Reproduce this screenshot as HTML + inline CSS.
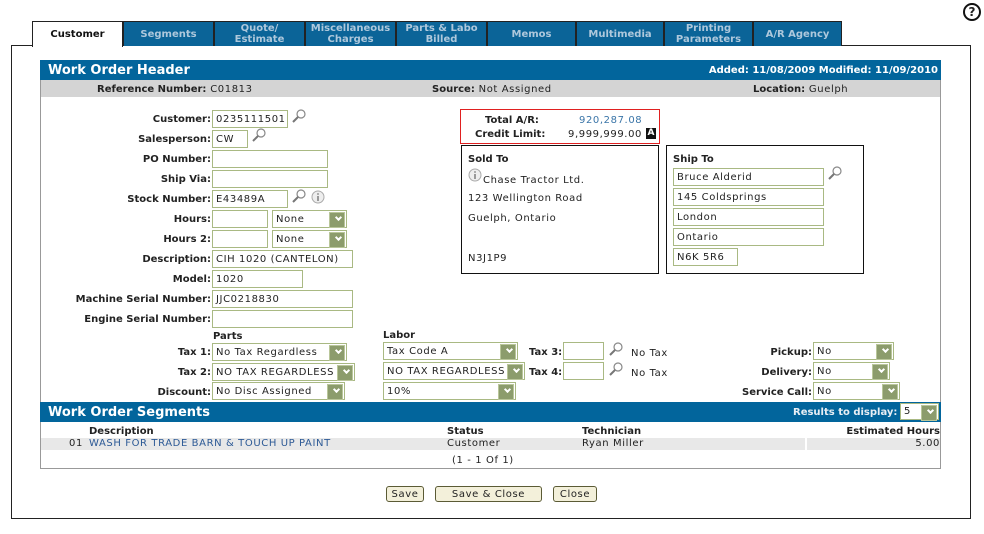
<!DOCTYPE html>
<html><head><meta charset="utf-8"><style>
*{margin:0;padding:0;box-sizing:border-box}
body{width:984px;height:534px;background:#fff;position:relative;font-family:"DejaVu Sans","Liberation Sans",sans-serif;font-size:10px;color:#222;overflow:hidden;letter-spacing:.6px}
b,.lbl,.tab{letter-spacing:0}
.a{position:absolute;white-space:nowrap}
.t{margin-top:1px}
.tab{position:absolute;top:21px;height:25px;background:#0b6498;border:1px solid #222;border-bottom:none;color:#aec8dc;font-weight:bold;font-size:10px;text-align:center;line-height:11px;display:flex;align-items:center;justify-content:center}
.lbl{position:absolute;font-weight:bold;text-align:right;width:200px;white-space:nowrap;margin-top:1px}
.in{position:absolute;height:18px;border:1px solid #a9b983;background:#fff;padding-left:3px;line-height:18px;white-space:nowrap;color:#222}
.sel{position:absolute;height:18px;border:1px solid #a9b983;background:#fff;padding-left:3px;line-height:18px;white-space:nowrap}
.sel:after{content:"";position:absolute;right:1px;top:1px;width:14px;height:14px;background:#8c9c6c;border:1px solid #b9c69a}
.sel i{position:absolute;right:5px;top:4px;width:5px;height:5px;border-right:2px solid #fff;border-bottom:2px solid #fff;transform:rotate(45deg);z-index:2}
.mag{position:absolute;width:14px;height:14px}
.btn{position:absolute;top:486px;height:16px;border:1px solid #5b5b35;border-radius:3px;background:#f3f0da;text-align:center;line-height:15px;font-size:10px}
</style></head><body>
<div class="a" style="left:963px;top:3px;width:18px;height:18px;border:2px solid #111;border-radius:50%;text-align:center;font-weight:bold;font-size:12px;line-height:14px;letter-spacing:0">?</div>

<div class="a" style="left:11px;top:45px;width:960px;height:474px;border:1px solid #222"></div>
<div class="tab" style="left:32px;width:91px;background:#fff;color:#111;height:26px">Customer</div>
<div class="tab" style="left:123px;width:91px">Segments</div>
<div class="tab" style="left:214px;width:91px">Quote/<br>Estimate</div>
<div class="tab" style="left:305px;width:91px">Miscellaneous<br>Charges</div>
<div class="tab" style="left:396px;width:91px">Parts &amp; Labo<br>Billed</div>
<div class="tab" style="left:487px;width:89px">Memos</div>
<div class="tab" style="left:576px;width:88px">Multimedia</div>
<div class="tab" style="left:664px;width:89px">Printing<br>Parameters</div>
<div class="tab" style="left:753px;width:89px">A/R Agency</div>

<div class="a" style="left:40px;top:60px;width:901px;height:409px;border:1px solid #999"></div>
<div class="a" style="left:40px;top:60px;width:901px;height:20px;background:#02659c;color:#fff;font-weight:bold;font-size:13px;line-height:21px;padding-left:8px;letter-spacing:0">Work Order Header</div>
<div class="a" style="right:46px;top:61px;color:#fff;font-weight:bold;font-size:10px;line-height:20px;letter-spacing:0">Added: 11/08/2009 Modified: 11/09/2010</div>
<div class="a" style="left:41px;top:80px;width:899px;height:17px;background:#d4d4d4"></div>
<div class="a" style="left:97px;top:84px"><b>Reference Number:</b> C01813</div>
<div class="a" style="left:432px;top:84px"><b>Source:</b> Not Assigned</div>
<div class="a" style="left:753px;top:84px"><b>Location:</b> Guelph</div>

<div class="lbl" style="left:11px;top:113px">Customer:</div><div class="in" style="left:212px;top:110px;width:76px">0235111501</div>
<div class="lbl" style="left:11px;top:133px">Salesperson:</div><div class="in" style="left:212px;top:130px;width:36px">CW</div>
<div class="lbl" style="left:11px;top:153px">PO Number:</div><div class="in" style="left:212px;top:150px;width:116px"></div>
<div class="lbl" style="left:11px;top:173px">Ship Via:</div><div class="in" style="left:212px;top:170px;width:116px"></div>
<div class="lbl" style="left:11px;top:193px">Stock Number:</div><div class="in" style="left:212px;top:190px;width:76px">E43489A</div>
<div class="lbl" style="left:11px;top:213px">Hours:</div><div class="in" style="left:212px;top:210px;width:56px"></div><div class="sel" style="left:272px;top:210px;width:75px">None<i></i></div>
<div class="lbl" style="left:11px;top:233px">Hours 2:</div><div class="in" style="left:212px;top:230px;width:56px"></div><div class="sel" style="left:272px;top:230px;width:75px">None<i></i></div>
<div class="lbl" style="left:11px;top:253px">Description:</div><div class="in" style="left:212px;top:250px;width:141px">CIH 1020 (CANTELON)</div>
<div class="lbl" style="left:11px;top:273px">Model:</div><div class="in" style="left:212px;top:270px;width:91px">1020</div>
<div class="lbl" style="left:11px;top:293px">Machine Serial Number:</div><div class="in" style="left:212px;top:290px;width:141px">JJC0218830</div>
<div class="lbl" style="left:11px;top:313px">Engine Serial Number:</div><div class="in" style="left:212px;top:310px;width:141px"></div>

<svg class="mag" style="left:292px;top:109px" viewBox="0 0 14 14"><circle cx="9" cy="5" r="4" fill="none" stroke="#888" stroke-width="1.2"/><path d="M6 8 L1 13" stroke="#777" stroke-width="2"/></svg>
<svg class="mag" style="left:252px;top:128px" viewBox="0 0 14 14"><circle cx="9" cy="5" r="4" fill="none" stroke="#888" stroke-width="1.2"/><path d="M6 8 L1 13" stroke="#777" stroke-width="2"/></svg>
<svg class="mag" style="left:292px;top:189px" viewBox="0 0 14 14"><circle cx="9" cy="5" r="4" fill="none" stroke="#888" stroke-width="1.2"/><path d="M6 8 L1 13" stroke="#777" stroke-width="2"/></svg>
<svg class="a" style="left:311px;top:190px" width="14" height="14" viewBox="0 0 14 14"><circle cx="7" cy="7" r="6" fill="#eee" stroke="#aaa"/><rect x="6" y="6" width="2" height="5" fill="#999"/><circle cx="7" cy="4" r="1" fill="#999"/></svg>

<div class="a" style="left:460px;top:109px;width:200px;height:35px;border:1px solid #e02020"></div>
<div class="a" style="left:485px;top:115px;font-weight:bold;letter-spacing:0">Total A/R:</div>
<div class="a" style="left:579px;top:115px;color:#3a75a8">920,287.08</div>
<div class="a" style="left:475px;top:129px;font-weight:bold;letter-spacing:0">Credit Limit:</div>
<div class="a" style="left:568px;top:129px">9,999,999.00</div>
<div class="a" style="left:646px;top:128px;width:10px;height:11px;background:#111;color:#fff;font-weight:bold;font-size:9px;text-align:center;line-height:11px;letter-spacing:0">A</div>

<div class="a" style="left:461px;top:145px;width:198px;height:129px;border:1px solid #111"></div>
<div class="a" style="left:468px;top:154px;font-weight:bold;letter-spacing:0">Sold To</div>
<svg class="a" style="left:468px;top:168px" width="14" height="14" viewBox="0 0 14 14"><circle cx="7" cy="7" r="6" fill="#eee" stroke="#aaa"/><rect x="6" y="6" width="2" height="5" fill="#999"/><circle cx="7" cy="4" r="1" fill="#999"/></svg>
<div class="a" style="left:483px;top:175px">Chase Tractor Ltd.</div>
<div class="a" style="left:468px;top:193px">123 Wellington Road</div>
<div class="a" style="left:468px;top:213px">Guelph, Ontario</div>
<div class="a" style="left:468px;top:253px">N3J1P9</div>

<div class="a" style="left:666px;top:145px;width:198px;height:129px;border:1px solid #111"></div>
<div class="a" style="left:673px;top:154px;font-weight:bold;letter-spacing:0">Ship To</div>
<div class="in" style="left:673px;top:168px;width:151px">Bruce Alderid</div>
<div class="in" style="left:673px;top:188px;width:151px">145 Coldsprings</div>
<div class="in" style="left:673px;top:208px;width:151px">London</div>
<div class="in" style="left:673px;top:228px;width:151px">Ontario</div>
<div class="in" style="left:673px;top:248px;width:65px">N6K 5R6</div>
<svg class="mag" style="left:828px;top:166px" viewBox="0 0 14 14"><circle cx="9" cy="5" r="4" fill="none" stroke="#888" stroke-width="1.2"/><path d="M6 8 L1 13" stroke="#777" stroke-width="2"/></svg>

<div class="a" style="left:213px;top:331px;font-weight:bold;letter-spacing:0">Parts</div>
<div class="a" style="left:383px;top:330px;font-weight:bold;letter-spacing:0">Labor</div>
<div class="lbl" style="left:11px;top:346px">Tax 1:</div><div class="sel" style="left:212px;top:343px;width:135px">No Tax Regardless<i></i></div>
<div class="lbl" style="left:11px;top:366px">Tax 2:</div><div class="sel" style="left:212px;top:363px;width:143px">NO TAX REGARDLESS<i></i></div>
<div class="lbl" style="left:11px;top:386px">Discount:</div><div class="sel" style="left:212px;top:382px;width:133px">No Disc Assigned<i></i></div>
<div class="sel" style="left:383px;top:342px;width:135px">Tax Code A<i></i></div>
<div class="sel" style="left:383px;top:362px;width:142px">NO TAX REGARDLESS<i></i></div>
<div class="sel" style="left:383px;top:382px;width:133px">10%<i></i></div>
<div class="a" style="left:529px;top:347px;font-weight:bold;letter-spacing:0">Tax 3:</div><div class="in" style="left:563px;top:342px;width:41px"></div>
<div class="a" style="left:529px;top:367px;font-weight:bold;letter-spacing:0">Tax 4:</div><div class="in" style="left:563px;top:362px;width:41px"></div>
<svg class="mag" style="left:609px;top:342px" viewBox="0 0 14 14"><circle cx="9" cy="5" r="4" fill="none" stroke="#888" stroke-width="1.2"/><path d="M6 8 L1 13" stroke="#777" stroke-width="2"/></svg>
<svg class="mag" style="left:609px;top:362px" viewBox="0 0 14 14"><circle cx="9" cy="5" r="4" fill="none" stroke="#888" stroke-width="1.2"/><path d="M6 8 L1 13" stroke="#777" stroke-width="2"/></svg>
<div class="a" style="left:631px;top:348px">No Tax</div>
<div class="a" style="left:631px;top:368px">No Tax</div>
<div class="lbl" style="left:612px;top:346px">Pickup:</div><div class="sel" style="left:813px;top:342px;width:81px">No<i></i></div>
<div class="lbl" style="left:612px;top:366px">Delivery:</div><div class="sel" style="left:813px;top:362px;width:77px">No<i></i></div>
<div class="lbl" style="left:612px;top:386px">Service Call:</div><div class="sel" style="left:813px;top:382px;width:87px">No<i></i></div>

<div class="a" style="left:40px;top:402px;width:901px;height:20px;background:#02659c;color:#fff;font-weight:bold;font-size:13px;line-height:21px;padding-left:8px;letter-spacing:0">Work Order Segments</div>
<div class="a" style="left:793px;top:407px;color:#e8eef4;font-weight:bold;letter-spacing:0">Results to display:</div>
<div class="sel" style="left:900px;top:403px;width:39px;height:17px;line-height:16px">5<i></i></div>
<div class="a" style="left:89px;top:426px;font-weight:bold;letter-spacing:0">Description</div>
<div class="a" style="left:447px;top:426px;font-weight:bold;letter-spacing:0">Status</div>
<div class="a" style="left:582px;top:426px;font-weight:bold;letter-spacing:0">Technician</div>
<div class="a" style="right:44px;top:426px;font-weight:bold;letter-spacing:0">Estimated Hours</div>
<div class="a" style="left:41px;top:438px;width:764px;height:12px;background:#e8e8e8"></div>
<div class="a" style="left:807px;top:438px;width:133px;height:12px;background:#e8e8e8"></div>
<div class="a" style="left:69px;top:438px">01</div>
<div class="a" style="left:89px;top:438px;color:#2d5a96">WASH FOR TRADE BARN &amp; TOUCH UP PAINT</div>
<div class="a" style="left:447px;top:438px">Customer</div>
<div class="a" style="left:582px;top:438px">Ryan Miller</div>
<div class="a" style="right:44px;top:438px">5.00</div>
<div class="a" style="left:452px;top:455px">(1 - 1 Of 1)</div>

<div class="btn" style="left:386px;width:38px">Save</div>
<div class="btn" style="left:435px;width:107px">Save &amp; Close</div>
<div class="btn" style="left:553px;width:44px">Close</div>
</body></html>
